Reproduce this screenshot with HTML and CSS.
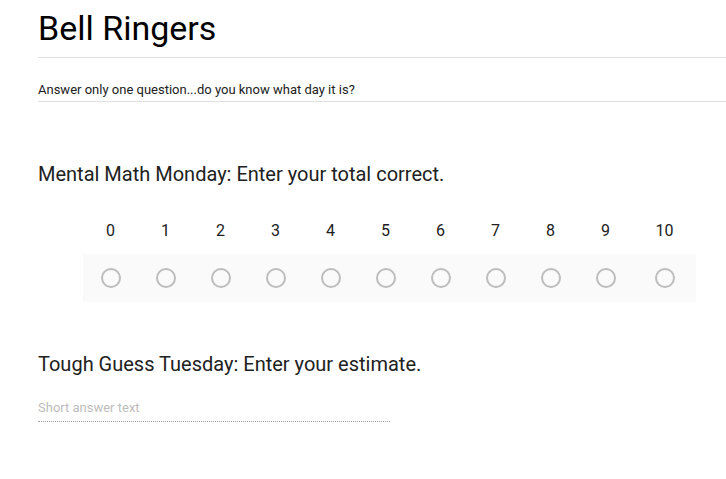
FILE: index.html
```html
<!DOCTYPE html>
<html lang="en">
<head>
  <meta charset="UTF-8" />
  <title>Bell Ringers</title>
  <link rel="stylesheet" href="styles.css">
</head>
<body>
  <div class="form">
    <div class="form-header">
      <h1 class="form-title">Bell Ringers</h1>
      <div class="form-desc">Answer only one question...do you know what day it is?</div>
    </div>

    <!-- Linear scale question -->
    <div class="question">
      <div class="question-title">Mental Math Monday: Enter your total correct.</div>
      <div class="scale">
        <div class="scale-labels" id="scale-labels"></div>
        <div class="scale-options" id="scale-options"></div>
      </div>
    </div>

    <!-- Short answer question -->
    <div class="question">
      <div class="question-title">Tough Guess Tuesday: Enter your estimate.</div>
      <div class="short-answer">Short answer text</div>
    </div>
  </div>

  <script>
    const labels = document.getElementById("scale-labels");
    const options = document.getElementById("scale-options");
    for (let i = 0; i <= 10; i++) {
      const label = document.createElement("div");
      label.className = "scale-cell";
      label.innerText = i;
      labels.appendChild(label);

      const cell = document.createElement("div");
      cell.className = "scale-cell";
      cell.innerHTML = '<span class="radio"></span>';
      options.appendChild(cell);
    }
  </script>
</body>
</html>
```

FILE: styles.css
```css
body {
  margin: 0;
  font-family: Roboto, "Liberation Sans", sans-serif;
  background: white;
  color: #202124;
}

.form {
  padding-left: 38px;
}

.form-header {
  padding-top: 8px;
}

.form-title {
  margin: 0;
  font-size: 34px;
  font-weight: 400;
  line-height: 40px;
  color: #000;
  padding-bottom: 9px;
  border-bottom: 1px solid #e0e0e0;
}

.form-desc {
  margin-top: 24px;
  font-size: 13px;
  line-height: 16px;
  color: #212121;
  padding-bottom: 3px;
  border-bottom: 1px solid #e0e0e0;
}

.question {
  margin-top: 60px;
}

.question + .question {
  margin-top: 50px;
}

.question-title {
  font-size: 20px;
  line-height: 24px;
  color: #212121;
}

.scale {
  margin-left: 45px;
  margin-top: 33px;
  width: 613px;
}

.scale-labels,
.scale-options {
  display: flex;
}

.scale-labels {
  font-size: 16px;
  line-height: 24px;
  color: #212121;
  padding-bottom: 11px;
}

.scale-options {
  background: #fafafa;
  height: 48px;
  align-items: center;
}

.scale-cell {
  width: 55px;
  text-align: center;
  display: flex;
  justify-content: center;
}

/* last column takes the leftover width */
.scale-cell:last-child {
  flex: 1;
}

.radio {
  width: 16px;
  height: 16px;
  border: 2px solid #bdbdbd;
  border-radius: 50%;
}

.short-answer {
  margin-top: 23px;
  width: 352px;
  font-size: 13px;
  line-height: 18px;
  padding-bottom: 4px;
  color: #bdbdbd;
  border-bottom: 1px dotted #9e9e9e;
}
```
